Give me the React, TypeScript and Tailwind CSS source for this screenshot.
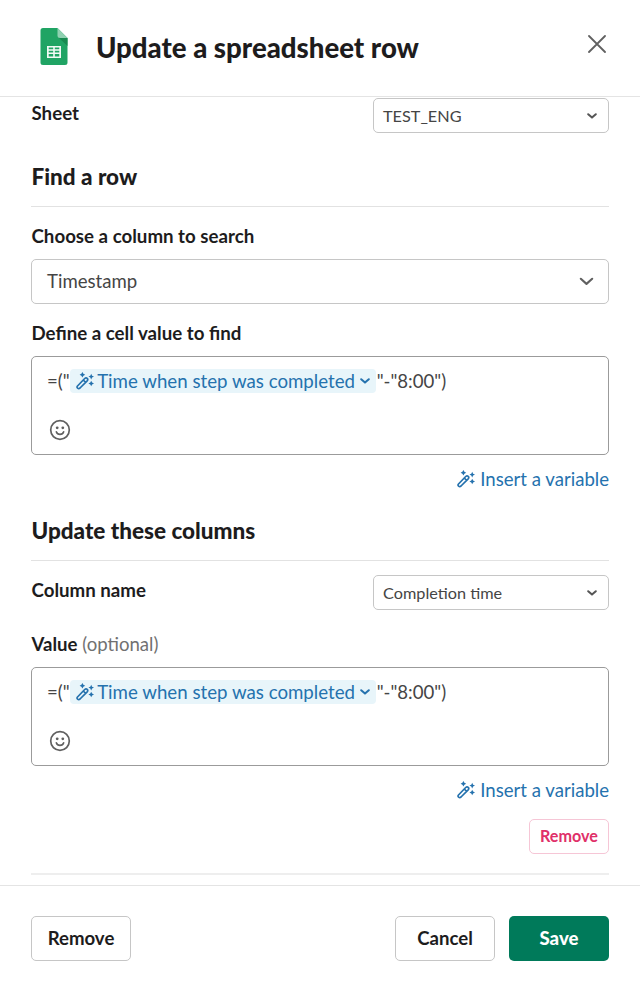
import React from "react";

function SheetsIcon() {
  return (
    <svg className="mt-[28px] h-[38px] w-[28px] shrink-0" viewBox="0 0 28 38">
      <path d="M3 0H17.5L27.5 10V34.5A2.5 2.5 0 0 1 25 37H3A2.5 2.5 0 0 1 .5 34.5V2.5A2.5 2.5 0 0 1 3 0Z" fill="#20a464" />
      <path d="M18.2 9.3L27.5 18V10Z" fill="#188a50" />
      <path d="M17.5 0L27.5 10H20A2.5 2.5 0 0 1 17.5 7.500Z" fill="#8fd1b1" />
      <path fillRule="evenodd" d="M7 18H21V30H7ZM8.700 19.600V21.300H13.200V19.600ZM14.800 19.600V21.300H19.300V19.600ZM8.700 22.800V24.500H13.200V22.800ZM14.800 22.800V24.500H19.300V22.800ZM8.700 26V28.400H13.200V26ZM14.800 26V28.400H19.300V26Z" fill="#f1faf5" />
    </svg>
  );
}

function Wand({ className }: { className: string }) {
  return (
    <svg className={className} viewBox="0 0 18 18" fill="none" stroke="currentColor" strokeWidth="1.700" strokeLinecap="round" strokeLinejoin="round">
      <path d="M1.500 14L8.700 6.500Q10 5.300 11.200 6.400Q12.300 7.500 11.200 8.800L4 16Q2.800 17 1.600 16.100Q.5 15.200 1.500 14ZM7.300 8L9.400 10.100" />
      <g fill="currentColor" stroke="none">
        <path d="M6.400 0L7.400 1.800L9.200 2.800L7.400 3.800L6.400 5.600L5.400 3.800L3.600 2.800L5.400 1.800Z" />
        <path d="M15.200 1.800L16.100 3.700L18 4.600L16.100 5.500L15.200 7.400L14.300 5.500L12.400 4.600L14.300 3.700Z" />
        <path d="M15.200 8.700L16.100 10.600L18 11.500L16.100 12.400L15.200 14.300L14.300 12.400L12.400 11.500L14.300 10.600Z" />
      </g>
    </svg>
  );
}

function Chevron({ className, weight = 2 }: { className: string; weight?: number }) {
  return (
    <svg className={className} viewBox="0 0 10 6" fill="none" stroke="currentColor" strokeWidth={weight} strokeLinecap="round" strokeLinejoin="round">
      <path d="M1.200 1.200L5 4.600L8.800 1.200" />
    </svg>
  );
}

function SmallSelect({ value }: { value: string }) {
  return (
    <div className="flex h-[35px] w-[236px] items-center justify-between rounded-[5px] border border-[#c6c6c6] pr-[11px] pl-[9px] text-[16.25px] text-[#454545]">
      <span>{value}</span>
      <Chevron className="h-[6px] w-[10px] text-[#555555]" />
    </div>
  );
}

function SectionTitle({ children }: { children: React.ReactNode }) {
  return <h2 className="pt-px pl-[0.5px] text-[22.5px] leading-[28px] font-black text-[#1d1c1d]">{children}</h2>;
}

function ValueField() {
  return (
    <>
      <div className="h-[99px] rounded-[5px] border border-[#9b9b9b] pt-[12px] pl-[15px]">
        <div className="flex h-[24px] items-center text-[18.6px] whitespace-pre text-[#454545]">
          <span>{'=("'}</span>
          <span className="flex h-[24px] w-[306px] items-center rounded-[4px] bg-[#e8f5fa] pl-[6px] text-[#2572ae]">
            <Wand className="h-[18px] w-[18px]" />
            <span className="ml-[3.5px] text-[18.7px]">Time when step was completed</span>
            <Chevron className="ml-[4.5px] h-[6px] w-[10px]" />
          </span>
          <span className="ml-px">{'"-"8:00")'}</span>
        </div>
        <svg className="mt-[26px] ml-[2px] h-[22px] w-[22px]" viewBox="0 0 22 22" fill="none" stroke="#606060">
          <circle cx="11" cy="11" r="9.300" strokeWidth="1.700" />
          <path d="M7.300 12.700Q8.200 15.400 11 15.400Q13.800 15.400 14.700 12.700" strokeWidth="1.600" strokeLinecap="round" />
          <g fill="#606060" stroke="none">
            <circle cx="8.200" cy="8.800" r="1.400" />
            <circle cx="13.800" cy="8.800" r="1.400" />
          </g>
        </svg>
      </div>
      <div className="mt-[12px] flex h-[24px] items-center justify-end text-[18.6px] text-[#2572ae]">
        <Wand className="mr-[5px] h-[18px] w-[18px]" />
        <span>Insert a variable</span>
      </div>
    </>
  );
}

export default function App() {
  return (
    <div className="flex h-[989px] w-[640px] flex-col overflow-hidden bg-white font-['Lato',sans-serif] text-[18.6px] leading-[24px] text-[#1d1c1d]">
      <header className="flex h-[97px] shrink-0 border-b border-[#e4e4e4] pl-[40px]">
        <SheetsIcon />
        <h1 className="mt-[31px] ml-[28px] text-[27.6px] leading-[34px] font-black">Update a spreadsheet row</h1>
        <svg className="mt-[35px] mr-[34px] ml-auto h-[18px] w-[18px]" viewBox="0 0 18 18" stroke="#606060" strokeWidth="1.800" strokeLinecap="round">
          <path d="M1 1L17 17M17 1L1 17" />
        </svg>
      </header>

      <main className="h-[788px] shrink-0 overflow-hidden pt-px pr-[31px] pl-[31px]">
        <div className="flex h-[35px] justify-between">
          <span className="mt-[3px] pl-[0.5px] text-[18.7px] font-bold">Sheet</span>
          <SmallSelect value="TEST_ENG" />
        </div>

        <div className="mt-[29px] h-[45px] border-b border-[#e2e2e2]">
          <SectionTitle>Find a row</SectionTitle>
        </div>
        <div className="mt-[17px] pl-[0.5px] text-[18.7px] font-bold">Choose a column to search</div>
        <div className="mt-[11px] flex h-[45px] items-center justify-between rounded-[5px] border border-[#c6c6c6] pr-[14px] pb-px pl-[15px] text-[#454545]">
          <span>Timestamp</span>
          <Chevron className="h-[9px] w-[15px] text-[#606060]" weight={1.4} />
        </div>
        <div className="mt-[17px] mb-[11px] pl-[0.5px] text-[18.7px] font-bold">Define a cell value to find</div>
        <ValueField />

        <div className="mt-[25px] h-[45px] border-b border-[#e2e2e2]">
          <SectionTitle>Update these columns</SectionTitle>
        </div>
        <div className="mt-[14px] flex h-[36px] justify-between">
          <span className="mt-[3px] pl-[0.5px] text-[18.7px] font-bold">Column name</span>
          <SmallSelect value="Completion time" />
        </div>
        <div className="mt-[21px] mb-[11px] pl-[0.5px]">
          <span className="font-bold">Value</span> <span className="text-[#717171]">(optional)</span>
        </div>
        <ValueField />
        <div className="mt-[17px] flex justify-end">
          <button className="h-[35px] w-[80px] rounded-[5px] border border-[#f6c6d6] pb-[2px] text-[16.2px] font-bold text-[#e03069]">Remove</button>
        </div>
        <div className="mt-[19px] h-[2px] bg-[#eeeeee]" />
      </main>

      <footer className="flex h-[104px] shrink-0 border-t border-[#e4e4e4] px-[31px] pt-[30px] font-bold">
        <button className="h-[45px] w-[100px] rounded-[5px] border border-[#c6c6c6] pb-[2px]">Remove</button>
        <button className="ml-auto h-[45px] w-[100px] rounded-[5px] border border-[#c6c6c6] pb-[2px]">Cancel</button>
        <button className="ml-[14px] h-[45px] w-[100px] rounded-[5px] bg-[#007a5a] pb-[2px] font-black text-white">Save</button>
      </footer>
    </div>
  );
}
